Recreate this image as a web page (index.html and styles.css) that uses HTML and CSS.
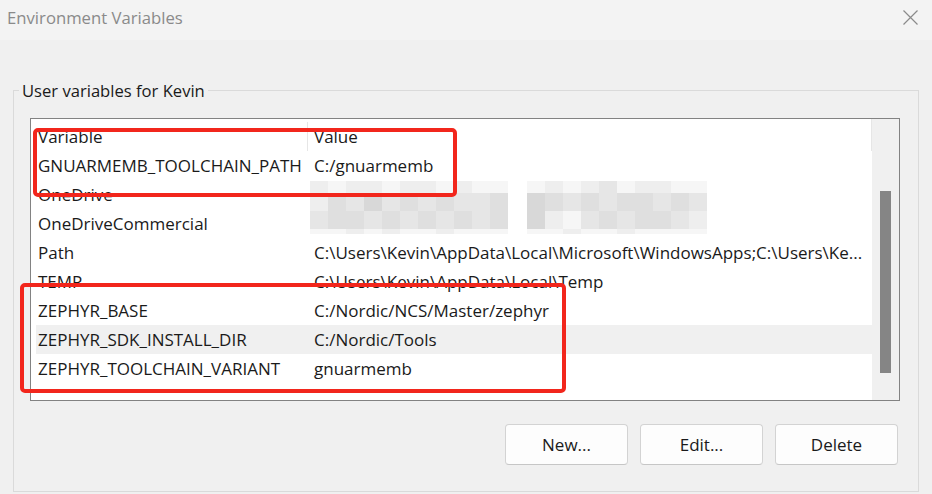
FILE: index.html
```html
<!DOCTYPE html>
<html lang="en">
<head>
<meta charset="utf-8">
<title>Environment Variables</title>
<link rel="stylesheet" href="styles.css">
</head>
<body>
<div class="titlebar">
  <span class="title">Environment Variables</span>
  <svg class="close" width="15" height="15" viewBox="0 0 15 15" aria-label="Close">
    <path d="M0.5 0.5 L14.5 14.5 M14.5 0.5 L0.5 14.5" stroke="#8a8a8a" stroke-width="1.2" fill="none"/>
  </svg>
</div>
<div class="content">
  <div class="group">
    <div class="legend">User variables for Kevin</div>
    <div class="list">
      <div class="list-main">
        <div class="header">
          <div class="c1">Variable</div>
          <div class="c2 hsep">Value</div>
        </div>
        <div class="row"><div class="c1">GNUARMEMB_TOOLCHAIN_PATH</div><div class="c2">C:/gnuarmemb</div></div>
        <div class="row"><div class="c1">OneDrive</div><div class="c2"></div></div>
        <div class="row"><div class="c1">OneDriveCommercial</div><div class="c2"></div></div>
        <div class="row"><div class="c1">Path</div><div class="c2">C:\Users\Kevin\AppData\Local\Microsoft\WindowsApps;C:\Users\Ke...</div></div>
        <div class="row"><div class="c1">TEMP</div><div class="c2">C:\Users\Kevin\AppData\Local\Temp</div></div>
        <div class="row"><div class="c1">ZEPHYR_BASE</div><div class="c2">C:/Nordic/NCS/Master/zephyr</div></div>
        <div class="row sel"><div class="c1">ZEPHYR_SDK_INSTALL_DIR</div><div class="c2">C:/Nordic/Tools</div></div>
        <div class="row"><div class="c1">ZEPHYR_TOOLCHAIN_VARIANT</div><div class="c2">gnuarmemb</div></div>
      </div>
      <div class="scrollbar"><div class="thumb"></div></div>
      <div class="mosaic">
        <div class="chunk c-a">
          <i class="g1"></i><i class="g0"></i><i class="g1"></i><i class="g1"></i><i class="g0"></i><i class="g1"></i><i class="g1"></i><i class="g0"></i><i class="g1"></i><i class="g0"></i><i class="g0"></i>
          <i class="g1"></i><i class="g3"></i><i class="g2"></i><i class="g4"></i><i class="g2"></i><i class="g3"></i><i class="g2"></i><i class="g3"></i><i class="g2"></i><i class="g2"></i><i class="g3"></i>
          <i class="g2"></i><i class="g3"></i><i class="g3"></i><i class="g2"></i><i class="g3"></i><i class="g2"></i><i class="g3"></i><i class="g2"></i><i class="g3"></i><i class="g2"></i><i class="g3"></i>
          <i class="g0"></i><i class="g0"></i><i class="g1"></i><i class="g0"></i><i class="g1"></i><i class="g0"></i><i class="g0"></i><i class="g1"></i><i class="g0"></i><i class="g0"></i><i class="g0"></i>
        </div>
        <div class="chunk c-b">
          <i class="g0"></i><i class="g1"></i><i class="g0"></i><i class="g1"></i><i class="g2"></i><i class="g0"></i><i class="g1"></i><i class="g1"></i><i class="g0"></i><i class="g0"></i>
          <i class="g4"></i><i class="g3"></i><i class="g2"></i><i class="g3"></i><i class="g2"></i><i class="g3"></i><i class="g3"></i><i class="g2"></i><i class="g3"></i><i class="g2"></i>
          <i class="g4"></i><i class="g1"></i><i class="g0"></i><i class="g2"></i><i class="g3"></i><i class="g2"></i><i class="g3"></i><i class="g3"></i><i class="g2"></i><i class="g1"></i>
          <i class="g0"></i><i class="g0"></i><i class="g1"></i><i class="g0"></i><i class="g0"></i><i class="g1"></i><i class="g0"></i><i class="g0"></i><i class="g0"></i><i class="g0"></i>
        </div>
      </div>
    </div>
    <div class="buttons">
      <button class="btn" type="button">New...</button>
      <button class="btn" type="button">Edit...</button>
      <button class="btn" type="button">Delete</button>
    </div>
  </div>
</div>
<div class="mark m1"></div>
<div class="mark m2"></div>
</body>
</html>
```

FILE: styles.css
```css
* { box-sizing: border-box; }
html, body { margin: 0; padding: 0; }
body {
  width: 932px;
  height: 494px;
  overflow: hidden;
  position: relative;
  background: #f0f0f0;
  font-family: "Open Sans", "Noto Sans", sans-serif;
  font-size: 17px;
  color: #1a1a1a;
}
.titlebar {
  height: 40px;
  background: #f3f3f3;
  display: flex;
  align-items: center;
  justify-content: space-between;
  padding: 0 14px 0 7px;
}
.title {
  color: #8a8a8a;
  font-size: 16.7px;
  margin-top: -5px;
}
.close { display: block; margin-top: -5px; }
.content { padding: 50px 13px 0 13px; }
.group {
  border: 1px solid #dadada;
  height: 402px;
  padding: 0 18px 0 16px;
  display: flex;
  flex-direction: column;
}
.legend {
  align-self: flex-start;
  height: 22px;
  line-height: 22px;
  font-size: 16.6px;
  margin: -11px 0 0 -11px;
  padding: 0 3px;
  background: #f0f0f0;
}
.list {
  position: relative;
  margin-top: 16px;
  width: 870px;
  height: 283px;
  border: 1px solid #828282;
  background: #ffffff;
  display: flex;
}
.list-main { flex: 1; min-width: 0; }
.header {
  height: 32px;
  display: flex;
  align-items: center;
  padding-top: 3px;
  margin-left: 5px;
  border-right: 1px solid #e6e6e6;
}
.row {
  height: 29px;
  display: flex;
  align-items: center;
  margin-left: 5px;
}
.row.sel { background: #f0f0f0; }
.c1 {
  width: 271px;
  flex: none;
  padding-left: 2px;
  white-space: nowrap;
  overflow: hidden;
}
.c2 {
  flex: 1;
  min-width: 0;
  padding-left: 7px;
  white-space: nowrap;
  overflow: hidden;
}
.header .c1, .header .c2 { height: 100%; display: flex; align-items: center; }
.hsep { border-left: 1px solid #e6e6e6; padding-left: 6px; }
.scrollbar {
  width: 27px;
  flex: none;
  background: #f0f0f0;
  padding: 72px 8px 0 8px;
}
.thumb { width: 11px; height: 182px; background: #858585; }
.mosaic {
  position: absolute;
  left: 279px;
  top: 62px;
  display: flex;
  gap: 19px;
}
.chunk {
  display: grid;
  grid-template-rows: 12px 18px 18px 5px;
  grid-auto-columns: 18px;
}
.c-a { grid-template-columns: repeat(11, 18px); }
.c-b { grid-template-columns: repeat(10, 18px); }
.chunk i { display: block; }
.g0 { background: #f6f6f6; }
.g1 { background: #eeeeee; }
.g2 { background: #e6e6e6; }
.g3 { background: #dfdfdf; }
.g4 { background: #d8d8d8; }
.buttons {
  display: flex;
  justify-content: flex-end;
  gap: 12px;
  margin-top: 23px;
  margin-right: 2px;
}
.btn {
  width: 123px;
  height: 41px;
  border: 1px solid #d3d3d3;
  border-bottom-color: #c6c6c6;
  border-radius: 4px;
  background: #fdfdfd;
  font: inherit;
  color: #1a1a1a;
  padding: 0;
}
.mark {
  position: absolute;
  border: 4.5px solid #f2261c;
  border-radius: 5px;
}
.m1 { left: 33px; top: 128px; width: 424px; height: 69px; }
.m2 { left: 20px; top: 283px; width: 546px; height: 110px; }
```
